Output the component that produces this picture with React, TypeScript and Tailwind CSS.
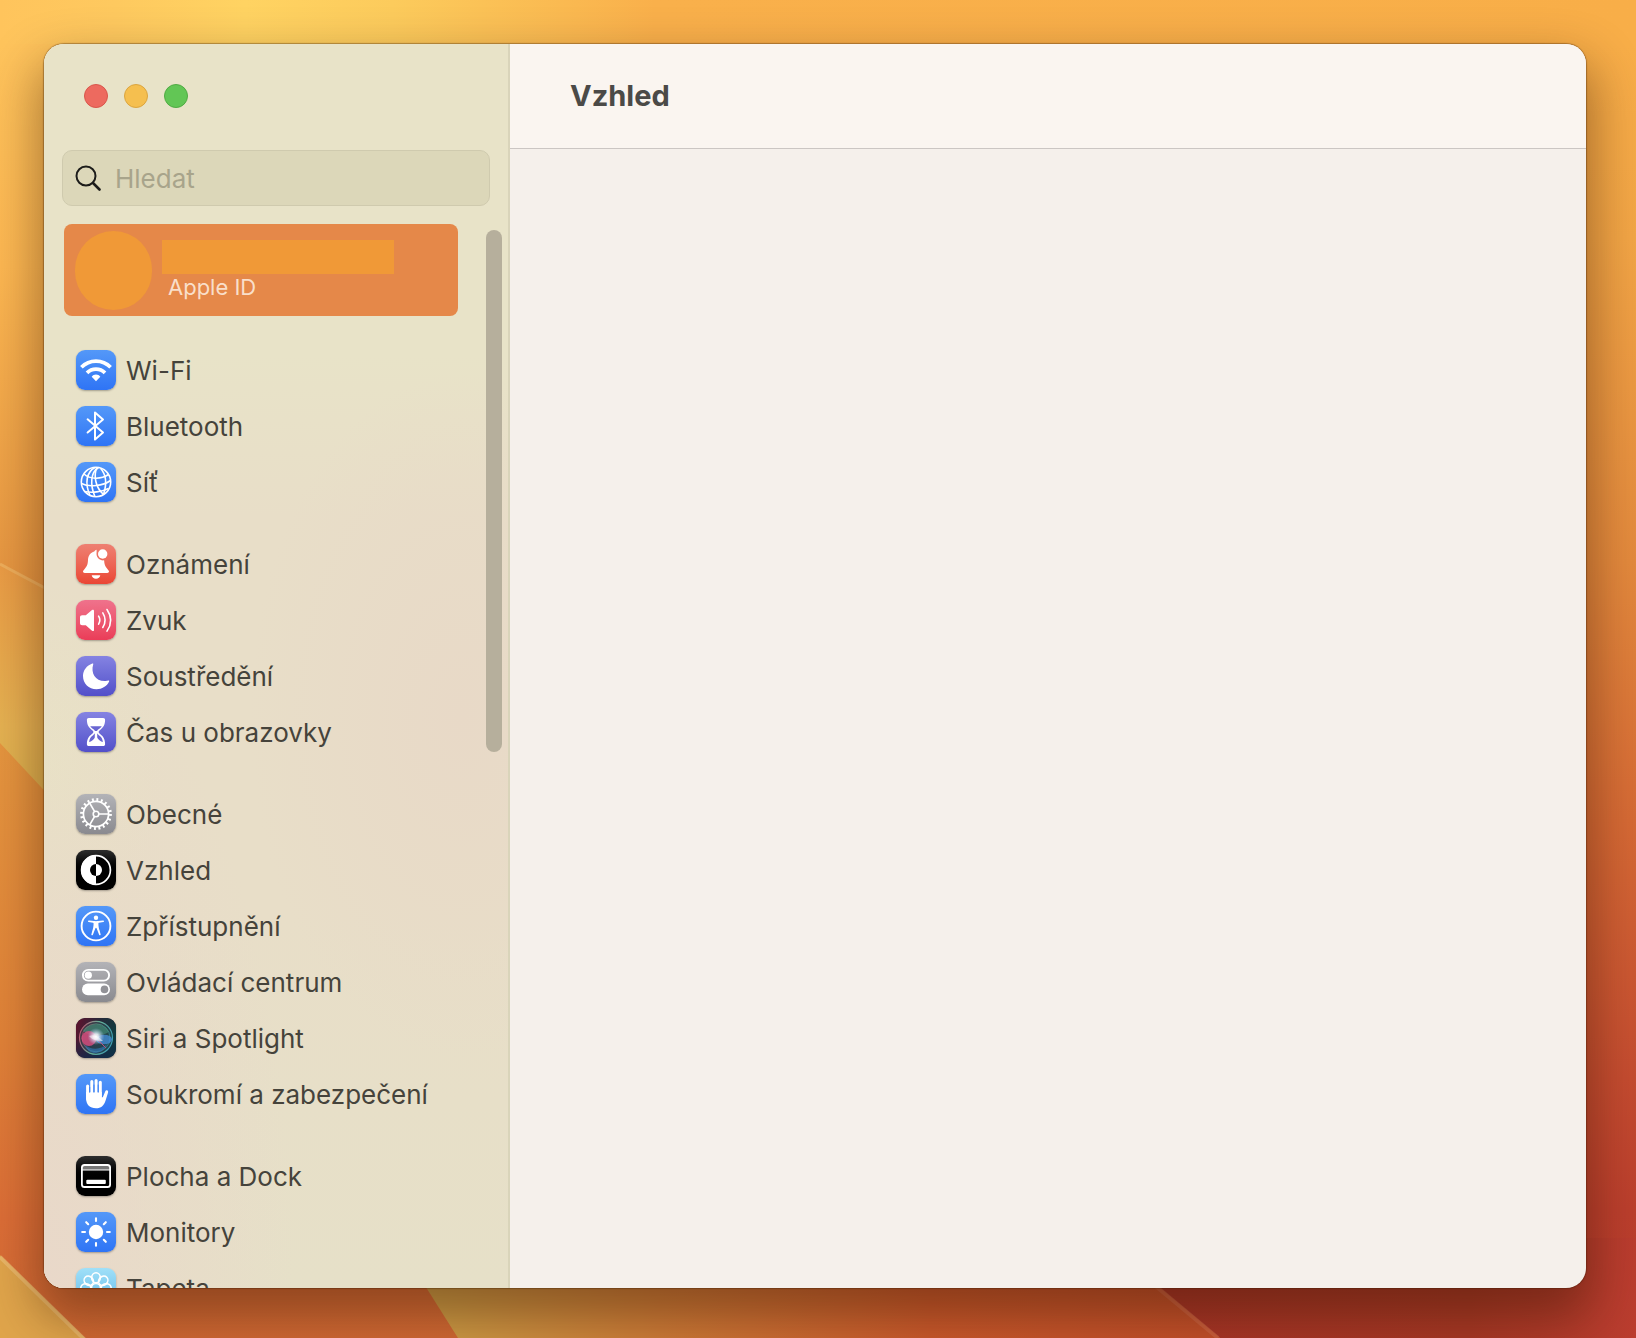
import type { ReactNode } from 'react'

interface SettingsItem {
    label: string
    tile: string
    icon: ReactNode
}

const BLUE = 'bg-linear-to-b from-[#5498f8] to-[#2f74f5]'
const INDIGO = 'bg-linear-to-b from-[#8583e2] to-[#534fc9]'
const GRAY = 'bg-linear-to-b from-[#b3b3b7] to-[#8a8a8f]'
const BLACK = 'bg-linear-to-b from-[#2e2e2e] to-[#000000] to-60%'

/* ---------- Icons (all drawn on a 40x40 grid) ---------- */

const WifiIcon = () => (
    <svg viewBox="0 0 40 40" fill="none" stroke="#fff" strokeWidth="3.7">
        <path d="M5.4 17.2A20.5 20.5 0 0 1 34.6 17.2" />
        <path d="M11 22.9A12.6 12.6 0 0 1 29 22.9" />
        <path d="M20 31.2l-4.300-4.500c1-1.400 2.600-2.200 4.300-2.200s3.300.8 4.300 2.200z" fill="#fff" stroke="none" />
    </svg>
)

const BluetoothIcon = () => (
    <svg viewBox="0 0 40 40" fill="none" stroke="#fff" strokeWidth="2" strokeLinejoin="round" strokeLinecap="round">
        <path d="M11.6 13.3L27 26.6 19 33.6V6.6L27 13.4 11.6 26.5" />
    </svg>
)

const GlobeIcon = () => (
    <svg viewBox="0 0 40 40" fill="none" stroke="#fff" strokeWidth="1.6">
        <circle cx="20" cy="20" r="14.7" />
        <path d="M19 5.500C10.500 10 8.500 21 14 33.500" />
        <path d="M21 5.500C17.500 13 19 25 27.500 32.500" />
        <path d="M24.500 6.300C30.500 13 31 22 27.500 32.500" />
        <path d="M22.500 5.500C15 10 13.500 22 19 34.700" />
        <path d="M8 12C14 17.500 25 17.500 32.500 12.500" />
        <path d="M5.500 21.500C13 25.500 27 24 34.500 18.500" />
        <path d="M8.500 29.500C16 31 26 30 32.500 26.500" />
    </svg>
)

const BellIcon = () => (
    <svg viewBox="0 0 40 40" fill="#fff">
        <path d="M20.6 5.8c-1.2.3-2 1-2.3 1.800-3.900 1.100-6.100 4.200-6.300 8.400-.2 4.300-.9 6-3.200 8.700-1.200 1.400-1.800 2.100-1.800 2.900 0 .9.7 1.400 1.700 1.400h22.600c1 0 1.700-.5 1.700-1.400 0-.8-.6-1.500-1.800-2.900-2-2.400-2.900-4.200-3.100-8.400-4 .6-7.500-2.200-7.600-6.200 0-1.600.3-3 .1-4.300z" />
        <circle cx="26.7" cy="10" r="4.700" />
        <path d="M15.700 31.200h8.600c-.4 2-2.100 3.600-4.300 3.600s-3.900-1.600-4.300-3.600z" />
    </svg>
)

const SoundIcon = () => (
    <svg viewBox="0 0 40 40" fill="none" stroke="#fff" strokeWidth="1.6" strokeLinecap="round">
        <path
            d="M6.200 15.300h3.600l6.200-5.200c1-.8 2-.4 2 .8v19c0 1.200-1 1.600-2 .8l-6.200-5.400H6.200c-1.400 0-2.200-.8-2.200-2.200v-5.600c0-1.400.8-2.200 2.200-2.200z"
            fill="#fff"
            stroke="none"
        />
        <path d="M22.600 16.200q2.500 4 0 8" />
        <path d="M26.800 12.900q4.600 7.300 0 14.600" />
        <path d="M31 9.500q7.400 10.800 0 21.600" />
    </svg>
)

const MoonIcon = () => (
    <svg viewBox="0 0 40 40" fill="#fff">
        <path d="M16.300 7.500c.7-.3 1.200.2.900.9C14.500 17 19.500 25.500 29.500 25c1.200 0 2-.3 2.700-.5.8-.2 1.200.3.900 1C31 30.200 26 33.200 20.500 33.200 12.800 33.200 7 27.500 7 20c0-5.600 3.700-10.500 9.300-12.500z" />
    </svg>
)

const HourglassIcon = () => (
    <svg viewBox="0 0 40 40">
        <path
            d="M12.800 6h14.400c1.200 0 1.900.8 1.900 1.800 0 5.200-2 7.900-5 10.200-2 1.500-2 2.600 0 4.100 3 2.300 5 5 5 10.100 0 1.100-.7 1.800-1.900 1.800H12.800c-1.200 0-1.900-.7-1.900-1.800 0-5.100 2-7.800 5-10.100 2-1.500 2-2.600 0-4.100-3-2.300-5-5-5-10.200 0-1 .7-1.800 1.900-1.800z"
            fill="#fff"
        />
        <path
            d="M14.300 14.200h11.400c-.8 1.300-1.700 2-2.800 2.900-1.500 1.100-2.100 2-2.100 3 0 1.200.7 2.100 2.100 3.100 2.400 1.800 3.700 3.600 4 6.800-2.400-.5-4-1.700-5.900-4.500v-6.600h-2v6.600c-1.800 2.800-3.500 4-5.900 4.500.3-3.200 1.600-5 4-6.800 1.400-1 2.100-1.900 2.100-3.100 0-1-.6-1.900-2.100-3-1.100-.9-2-1.600-2.800-2.900z"
            fill="#6966d2"
        />
        <path d="M18.800 19h2.400v7h-2.400z" fill="#fff" />
    </svg>
)

const GearIcon = () => (
    <svg viewBox="0 0 40 40" fill="none" stroke="#fff">
        <circle cx="20" cy="20" r="12.600" strokeWidth="1.700" />
        <circle cx="20" cy="20" r="14.400" strokeWidth="3" strokeDasharray="1.900 2.622" />
        <circle cx="20" cy="20" r="2.800" strokeWidth="1.600" />
        <path d="M23 20h9.500M18.500 17.400L13.700 9.100M18.500 22.600L13.700 30.900" strokeWidth="1.700" />
    </svg>
)

const AppearanceIcon = () => (
    <svg viewBox="0 0 40 40">
        <circle cx="20" cy="20" r="14.400" fill="#000" stroke="#fff" strokeWidth="1.700" />
        <path d="M20 5a15 15 0 0 0 0 30z" fill="#fff" />
        <path d="M20 14a6 6 0 0 0 0 12z" fill="#000" />
        <path d="M20 14a6 6 0 0 1 0 12z" fill="#fff" />
    </svg>
)

const AccessibilityIcon = () => (
    <svg viewBox="0 0 40 40" fill="#fff">
        <circle cx="20" cy="20" r="14.400" fill="none" stroke="#fff" strokeWidth="1.900" />
        <circle cx="20" cy="11.700" r="2.200" />
        <path d="M12.900 14.400l5.100.7c1.400.2 2.600.2 4 0l5.100-.7c1.100-.1 1.300 1.300.2 1.500l-4.300.9c-.5.1-.6.4-.6.9.1 3 .4 4.300 1.200 6.900l1 3.600c.3 1.100-1.100 1.600-1.500.5l-2.500-6.500c-.3-.7-.9-.7-1.200 0l-2.500 6.500c-.4 1.100-1.800.6-1.500-.5l1-3.600c.8-2.600 1.100-3.900 1.200-6.900 0-.5-.1-.8-.6-.9l-4.300-.9c-1.100-.2-.9-1.600.2-1.500z" />
    </svg>
)

const ControlCenterIcon = () => (
    <svg viewBox="0 0 40 40" fill="#fff">
        <rect x="6.900" y="7.900" width="26.200" height="10.700" rx="5.300" fill="none" stroke="#fff" strokeWidth="1.900" />
        <circle cx="12.300" cy="13.200" r="3.600" />
        <rect x="6" y="21.600" width="28" height="11.600" rx="5.800" />
        <circle cx="28.500" cy="27.400" r="3.800" fill="#929297" />
    </svg>
)

const SiriIcon = () => (
    <svg viewBox="0 0 40 40">
        <defs>
            <linearGradient id="siri-tile" x1="0" y1="0" x2="1" y2="0.3">
                <stop offset="0" stopColor="#64112d" />
                <stop offset="0.5" stopColor="#2b2638" />
                <stop offset="1" stopColor="#103b40" />
            </linearGradient>
            <linearGradient id="siri-base" x1="0" y1="0" x2="0" y2="1">
                <stop offset="0.5" stopColor="#12204d" stopOpacity="0" />
                <stop offset="1" stopColor="#122650" stopOpacity="0.6" />
            </linearGradient>
            <linearGradient id="siri-ring" x1="0" y1="0.2" x2="1" y2="0.5">
                <stop offset="0" stopColor="#c4516f" />
                <stop offset="0.5" stopColor="#66ad94" />
                <stop offset="1" stopColor="#3f9fb3" />
            </linearGradient>
            <radialGradient id="siri-glow">
                <stop offset="0" stopColor="#fff" />
                <stop offset="0.3" stopColor="#f4f7ff" stopOpacity="0.85" />
                <stop offset="1" stopColor="#a9c6ef" stopOpacity="0" />
            </radialGradient>
        </defs>
        <rect width="40" height="40" rx="9" fill="url(#siri-tile)" />
        <rect width="40" height="40" rx="9" fill="url(#siri-base)" />
        <circle cx="20" cy="19.800" r="16.500" fill="#48857a" fillOpacity="0.250" stroke="url(#siri-ring)" strokeWidth="1.200" />
        <circle cx="20" cy="19.800" r="14" fill="none" stroke="url(#siri-ring)" strokeOpacity="0.600" />
        <path d="M7 13C12 4 28 4 33 14c-6 4-19 5-26-1z" fill="#46967d" fillOpacity="0.600" />
        <circle cx="13" cy="20.500" r="7.500" fill="#dd4d80" fillOpacity="0.800" />
        <ellipse cx="28" cy="21.500" rx="8" ry="4.800" fill="#468fdc" fillOpacity="0.750" />
        <path d="M9 27c6 5 16 5 22-1-3 7-8 9-12 9s-8-2-10-8z" fill="#3479ba" fillOpacity="0.600" />
        <path d="M20 20l10 10" stroke="#bb527c" strokeWidth="1" />
        <circle cx="20" cy="18.500" r="8.500" fill="url(#siri-glow)" />
        <path d="M13 18c5-2 9 0 14 5-6 0-11-1-14-5z" fill="#fff" fillOpacity="0.500" />
    </svg>
)

const HandIcon = () => (
    <svg viewBox="0 0 40 40" fill="none" stroke="#fff" strokeLinecap="round">
        <path d="M11.600 12v13M15.800 7.600V20M20.100 6.500V20M24.300 8.200V22" strokeWidth="3" />
        <path
            d="M10.100 18h15.700v5.200c.6.3 1 .1 1.300-.7l2-4.700c.5-1.200 1.500-1.700 2.300-1.300.7.4.9 1.200.6 2.200l-2.500 8C27.900 31.600 25 34.300 20 34.300c-6.200 0-9.900-3.600-9.900-10z"
            fill="#fff"
            stroke="none"
        />
        <path d="M13.700 18.300v-5M17.950 18.300V11M22.200 18.300V11" stroke="#4084f6" strokeWidth="1" />
    </svg>
)

const DockIcon = () => (
    <svg viewBox="0 0 40 40" fill="none" stroke="#fff">
        <path d="M6 10h28v4H6z" fill="#777" stroke="none" />
        <rect x="5.900" y="9" width="28.200" height="22" rx="2.600" strokeWidth="1.800" />
        <path d="M6 14h28" strokeWidth="1.200" />
        <rect x="10.300" y="23.800" width="19.500" height="4.200" rx="1" fill="#fff" stroke="none" />
    </svg>
)

const SunIcon = () => (
    <svg viewBox="0 0 40 40" stroke="#fff" strokeWidth="2.100" strokeLinecap="round">
        <circle cx="20" cy="20" r="7.200" fill="#fff" stroke="none" />
        <path d="M20 6.200v2.800M20 31v2.800M6.200 20H9M31 20h2.800M10.200 10.200l2 2M27.800 27.800l2 2M29.800 10.200l-2 2M12.200 27.800l-2 2" />
    </svg>
)

const FlowerIcon = () => (
    <svg viewBox="0 0 40 40" fill="none" stroke="#fff" strokeWidth="1.600">
        {[0, 45, 90, 135, 180, 225, 270, 315].map((angle) => (
            <ellipse key={angle} cx="20" cy="9.800" rx="4.300" ry="5" transform={`rotate(${angle} 20 20)`} />
        ))}
        <circle cx="20" cy="20" r="4.500" />
    </svg>
)

/* ---------- Data ---------- */

const groups: SettingsItem[][] = [
    [
        { label: 'Wi-Fi', tile: BLUE, icon: <WifiIcon /> },
        { label: 'Bluetooth', tile: BLUE, icon: <BluetoothIcon /> },
        { label: 'Síť', tile: BLUE, icon: <GlobeIcon /> },
    ],
    [
        { label: 'Oznámení', tile: 'bg-linear-to-b from-[#ee8072] to-[#ea4534]', icon: <BellIcon /> },
        { label: 'Zvuk', tile: 'bg-linear-to-b from-[#ef728c] to-[#ea3c58]', icon: <SoundIcon /> },
        { label: 'Soustředění', tile: INDIGO, icon: <MoonIcon /> },
        { label: 'Čas u obrazovky', tile: INDIGO, icon: <HourglassIcon /> },
    ],
    [
        { label: 'Obecné', tile: GRAY, icon: <GearIcon /> },
        { label: 'Vzhled', tile: BLACK, icon: <AppearanceIcon /> },
        { label: 'Zpřístupnění', tile: BLUE, icon: <AccessibilityIcon /> },
        { label: 'Ovládací centrum', tile: GRAY, icon: <ControlCenterIcon /> },
        { label: 'Siri a Spotlight', tile: 'bg-[#2b2638]', icon: <SiriIcon /> },
        { label: 'Soukromí a zabezpečení', tile: BLUE, icon: <HandIcon /> },
    ],
    [
        { label: 'Plocha a Dock', tile: BLACK, icon: <DockIcon /> },
        { label: 'Monitory', tile: BLUE, icon: <SunIcon /> },
        { label: 'Tapeta', tile: 'bg-linear-to-b from-[#a0e0f8] to-[#5fb8e8]', icon: <FlowerIcon /> },
    ],
]

/* ---------- Desktop picture behind the window ---------- */

function Wallpaper() {
    return (
        <svg
            className="absolute inset-0 -z-10 h-full w-full"
            viewBox="0 0 1636 1338"
            preserveAspectRatio="none"
            aria-hidden="true"
        >
            <defs>
                <linearGradient id="wp-top" x1="0" y1="0" x2="1" y2="0">
                    <stop offset="0" stopColor="#ffc45c" />
                    <stop offset="0.07" stopColor="#fec95f" />
                    <stop offset="0.15" stopColor="#ffd362" />
                    <stop offset="0.24" stopColor="#fccb5c" />
                    <stop offset="0.4" stopColor="#f9b04b" />
                    <stop offset="1" stopColor="#f8ae48" />
                </linearGradient>
                <linearGradient id="wp-left" x1="0" y1="0" x2="0" y2="1">
                    <stop offset="0" stopColor="#ffc45c" />
                    <stop offset="0.4" stopColor="#fdb852" />
                    <stop offset="1" stopColor="#e59440" />
                </linearGradient>
                <linearGradient id="wp-right" x1="0" y1="0" x2="0" y2="1">
                    <stop offset="0" stopColor="#f8ae48" />
                    <stop offset="0.15" stopColor="#f3a646" />
                    <stop offset="0.4" stopColor="#e48a3d" />
                    <stop offset="0.6" stopColor="#d66a35" />
                    <stop offset="0.8" stopColor="#c54c30" />
                    <stop offset="0.9" stopColor="#bc3f2d" />
                    <stop offset="1" stopColor="#b93c2e" />
                </linearGradient>
                <linearGradient id="wp-band" x1="0" y1="563" x2="0" y2="780" gradientUnits="userSpaceOnUse">
                    <stop offset="0" stopColor="#eb9c45" />
                    <stop offset="0.75" stopColor="#e6b252" />
                    <stop offset="1" stopColor="#e0b24f" />
                </linearGradient>
                <linearGradient id="wp-ember" x1="0" y1="0" x2="0" y2="1">
                    <stop offset="0" stopColor="#e6963f" />
                    <stop offset="0.5" stopColor="#e08238" />
                    <stop offset="0.8" stopColor="#dc6e37" />
                    <stop offset="1" stopColor="#d26a34" />
                </linearGradient>
                <linearGradient id="wp-floor" x1="427" y1="0" x2="1200" y2="0" gradientUnits="userSpaceOnUse">
                    <stop offset="0" stopColor="#cfa047" />
                    <stop offset="0.3" stopColor="#cf7d38" />
                    <stop offset="0.65" stopColor="#cc5a2c" />
                    <stop offset="1" stopColor="#c4502a" />
                </linearGradient>
                <linearGradient id="wp-corner" x1="1160" y1="0" x2="1636" y2="0" gradientUnits="userSpaceOnUse">
                    <stop offset="0" stopColor="#a93527" />
                    <stop offset="0.65" stopColor="#a83825" />
                    <stop offset="1" stopColor="#bb3d2f" />
                </linearGradient>
            </defs>
            <rect width="1636" height="1338" fill="url(#wp-top)" />
            <path d="M0 44H300V600H0z" fill="url(#wp-left)" />
            <path d="M1400 44H1636V1338H1400z" fill="url(#wp-right)" />
            <path d="M0 563L300 720V1065L0 800z" fill="url(#wp-band)" />
            <path d="M0 564L60 596" stroke="#f2bb6a" strokeOpacity="0.600" strokeWidth="3" />
            <path d="M0 743L300 1065H600V1338H0z" fill="url(#wp-ember)" />
            <path d="M0 1255L85 1338H0z" fill="#e0a54b" />
            <path d="M0 1257L85 1340" stroke="#efc27a" strokeOpacity="0.600" strokeWidth="4" />
            <path d="M395 1238H1150L1220 1338H458z" fill="url(#wp-floor)" />
            <path d="M1100 1238L1220 1338H1636V1238z" fill="url(#wp-corner)" />
            <path d="M1098 1238L1218 1338" stroke="#d0694a" strokeOpacity="0.600" strokeWidth="4" />
        </svg>
    )
}

/* ---------- Sidebar ---------- */

function WindowControls() {
    return (
        <div className="flex gap-4 px-10 pt-10">
            <button aria-label="Zavřít" className="size-6 rounded-full border border-[#d9564b] bg-[#ed6a5f]" />
            <button aria-label="Minimalizovat" className="size-6 rounded-full border border-[#dba53f] bg-[#f5bf4f]" />
            <button aria-label="Zvětšit" className="size-6 rounded-full border border-[#50ab43] bg-[#62c655]" />
        </div>
    )
}

function SearchField() {
    return (
        <label className="mx-[18px] mt-[42px] flex h-14 shrink-0 items-center gap-[14px] rounded-[10px] border border-[#cfcaae] bg-[#dcd7b9] px-3">
            <svg viewBox="0 0 26 26" className="size-[26px] shrink-0" fill="none" stroke="#1c1c1a" strokeLinecap="round">
                <circle cx="11" cy="11" r="9.500" strokeWidth="2" />
                <path d="M18 18l6.500 6.500" strokeWidth="2.600" />
            </svg>
            <input
                type="text"
                aria-label="Hledat"
                placeholder="Hledat"
                className="w-full min-w-0 bg-transparent text-[26px] text-[#45433a] outline-none placeholder:text-[#a8a48b]"
            />
        </label>
    )
}

function AccountRow() {
    return (
        <a href="#apple-id" className="ml-5 mr-[50px] flex h-[92px] shrink-0 items-center rounded-lg bg-[#e58849] px-[11px]">
            <span className="h-[79px] w-[77px] shrink-0 rounded-full bg-[#f09937]" />
            <span className="ml-[10px] flex flex-col">
                <span className="h-[34px] w-[232px] bg-[#f09937]" />
                <span className="pl-[6px] text-[22px] leading-[26px] text-[#f9dfca]">Apple ID</span>
            </span>
        </a>
    )
}

function Sidebar() {
    return (
        <aside className="relative flex w-[466px] shrink-0 flex-col overflow-hidden border-r-2 border-[#d9d4ba] bg-[#e8e3c8] bg-[radial-gradient(ellipse_at_90%_54%,#e8d9c7_0%,transparent_36%),radial-gradient(ellipse_at_0%_100%,#e9d8c9_0%,transparent_38%),radial-gradient(ellipse_at_0%_58%,#e8e3c5_0%,transparent_18%),linear-gradient(to_bottom,#e8e3c8_25%,#e8dec8_38%,#e8dec8_70%,#e6e0c8_100%)]">
            <WindowControls />
            <SearchField />
            <div className="relative mt-[18px] flex min-h-0 flex-1 flex-col overflow-hidden">
                <AccountRow />
                <nav className="flex shrink-0 flex-col">
                    {groups.map((group, index) => (
                        <ul key={index} className="mt-[26px]">
                            {group.map((item) => (
                                <li key={item.label}>
                                    <a href="#" className="flex h-14 items-center gap-[10px] pl-8 text-[26px] text-[#45433b]">
                                        <span className={`size-10 shrink-0 overflow-hidden rounded-[9px] shadow-[0_1px_2px_rgba(0,0,0,0.3)] ${item.tile}`}>
                                            {item.icon}
                                        </span>
                                        {item.label}
                                    </a>
                                </li>
                            ))}
                        </ul>
                    ))}
                </nav>
                {/* Overlay scrollbar */}
                <div className="absolute right-[6px] top-[6px] h-[522px] w-4 rounded-full bg-[#b6af9c]" />
            </div>
        </aside>
    )
}

export default function App() {
    return (
        <div className="relative isolate flex h-screen overflow-hidden pt-11 pr-[50px] pb-[50px] pl-11 font-['Inter','Liberation_Sans',sans-serif]">
            <Wallpaper />
            <div className="flex min-w-0 flex-1 overflow-hidden rounded-[20px] bg-[#f5f0eb] shadow-[0_0_1px_1px_rgba(60,25,0,0.35),0_24px_50px_6px_rgba(50,20,0,0.42)]">
                <Sidebar />
                <main className="flex min-w-0 flex-1 flex-col">
                    <header className="flex h-[105px] items-center border-b border-[#cbc6c3] bg-[#faf5f0] px-[60px]">
                        <h1 className="text-[29px] font-bold text-[#4b4a47]">Vzhled</h1>
                    </header>
                </main>
            </div>
        </div>
    )
}
